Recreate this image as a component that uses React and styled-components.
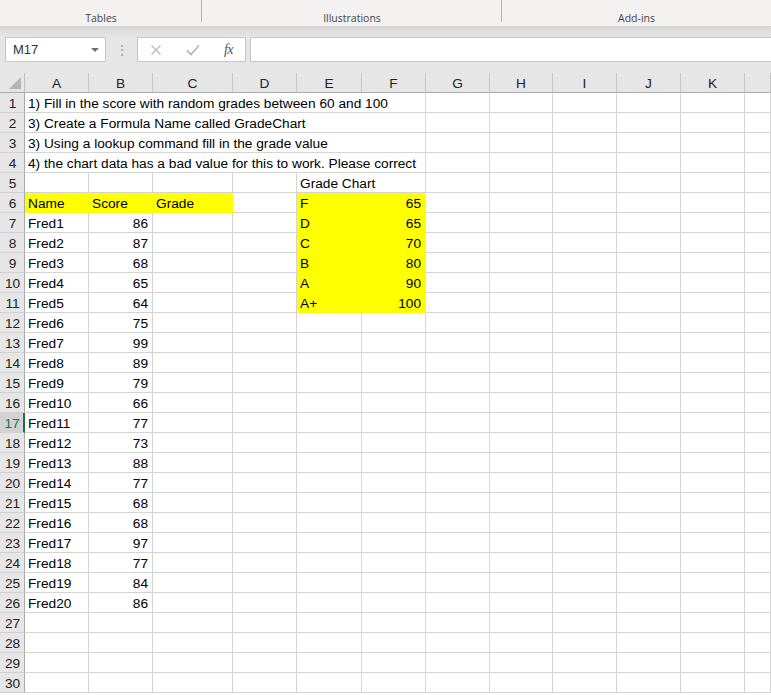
import styled, { createGlobalStyle } from "styled-components";

const COLS = ["A", "B", "C", "D", "E", "F", "G", "H", "I", "J", "K", ""];
const TEMPLATE = "25px 64px 64px 80px 64px 65px 64px 64px 63px 64px 64px 64px 1fr";

const scores = [86, 87, 68, 65, 64, 75, 99, 89, 79, 66, 77, 73, 88, 77, 68, 68, 97, 77, 84, 86];
const chart = [["F", 65], ["D", 65], ["C", 70], ["B", 80], ["A", 90], ["A+", 100]];
const notes = [
  "1) Fill in the score with random grades between 60 and 100",
  "3) Create a Formula Name called GradeChart",
  "3) Using a lookup command fill in the grade value",
  "4) the chart data has a bad value for this to work. Please correct",
];

// build a map of row -> cells keyed by column index
const buildRows = () => {
  const rows = [];
  for (let r = 1; r <= 30; r++) rows.push({ num: r, cells: {} });
  const set = (r, c, cell) => (rows[r - 1].cells[c] = cell);

  notes.forEach((t, i) => set(i + 1, 0, { text: t, span: 6 }));
  set(5, 4, { text: "Grade Chart", span: 2 });
  set(6, 0, { text: "Name", fill: true });
  set(6, 1, { text: "Score", fill: true });
  set(6, 2, { text: "Grade", fill: true });
  scores.forEach((s, i) => {
    set(i + 7, 0, { text: `Fred${i + 1}` });
    set(i + 7, 1, { text: s, right: true });
  });
  chart.forEach(([g, v], i) => {
    set(i + 6, 4, { text: g, fill: true });
    set(i + 6, 5, { text: v, right: true, fill: true });
  });
  return rows;
};

const Cross = () => (
  <svg width="12" height="12" viewBox="0 0 12 12">
    <path d="M1.5 1.5 L10.5 10.5 M10.5 1.5 L1.5 10.5" stroke="#b9b9b9" strokeWidth="1.3" fill="none" />
  </svg>
);

const Check = () => (
  <svg width="14" height="12" viewBox="0 0 14 12">
    <path d="M1 6.5 L5 10.5 L13 1.5" stroke="#b9b9b9" strokeWidth="1.8" fill="none" />
  </svg>
);

const App = () => {
  const rows = buildRows();
  return (
    <>
      <GlobalStyle />
      <Ribbon>
        <RibbonGroup $w="202px">Tables</RibbonGroup>
        <RibbonGroup $w="300px">Illustrations</RibbonGroup>
        <RibbonGroup $last>Add-ins</RibbonGroup>
      </Ribbon>

      <FormulaBar>
        <NameBox>
          M17
          <Caret />
        </NameBox>
        <Grip>⋮</Grip>
        <FxBox>
          <Cross />
          <Check />
          <Fx>fx</Fx>
        </FxBox>
        <FormulaInput />
      </FormulaBar>

      <Sheet>
        <Row>
          <Corner>
            <Triangle />
          </Corner>
          {COLS.map((c, i) => (
            <ColHead key={i}>{c}</ColHead>
          ))}
        </Row>
        {rows.map((row) => {
          const out = [];
          for (let c = 0; c < COLS.length; c++) {
            const cell = row.cells[c];
            if (cell) {
              out.push(
                <Cell key={c} $span={cell.span} $right={cell.right} $fill={cell.fill}>
                  {cell.text}
                </Cell>
              );
              c += (cell.span || 1) - 1;
            } else {
              out.push(<Cell key={c} />);
            }
          }
          return (
            <Row key={row.num}>
              <RowHead $active={row.num === 17}>{row.num}</RowHead>
              {out}
            </Row>
          );
        })}
      </Sheet>
    </>
  );
};

export default App;

const GlobalStyle = createGlobalStyle`
  body {
    margin: 0;
    background: #ffffff;
    overflow: hidden;
  }
`;

const Ribbon = styled.div`
  display: flex;
  height: 26px;
  background: #f3f2f1;
  font-family: "Open Sans", "Noto Sans", sans-serif;
  font-size: 10.5px;
  color: #444444;
`;

const RibbonGroup = styled.div`
  ${({ $w }) => ($w ? `width: ${$w};` : "flex: 1;")}
  box-sizing: border-box;
  display: flex;
  justify-content: center;
  padding-top: 11px;
  position: relative;

  &::after {
    content: "";
    display: ${({ $last }) => ($last ? "none" : "block")};
    position: absolute;
    right: 0;
    top: 0;
    height: 22px;
    width: 1px;
    background: #b3b3b3;
  }
`;

const FormulaBar = styled.div`
  height: 47px;
  box-sizing: border-box;
  background: linear-gradient(#d5d5d5 0px, #e2e2e2 8px, #e6e6e6 11px);
  display: flex;
  align-items: flex-start;
  padding: 11px 0 0 5px;
  font-family: "Liberation Sans", Arial, sans-serif;
`;

const NameBox = styled.div`
  width: 101px;
  height: 25px;
  box-sizing: border-box;
  background: #ffffff;
  border: 1px solid #c6c6c6;
  display: flex;
  align-items: center;
  justify-content: space-between;
  padding: 0 6px 0 7px;
  font-size: 13px;
  color: #333333;
`;

const Caret = styled.span`
  width: 0;
  height: 0;
  border-left: 4px solid transparent;
  border-right: 4px solid transparent;
  border-top: 4px solid #707070;
`;

const Grip = styled.div`
  width: 31px;
  height: 25px;
  display: flex;
  align-items: center;
  justify-content: center;
  color: #a0a0a0;
  font-size: 14px;
`;

const FxBox = styled.div`
  width: 109px;
  height: 25px;
  box-sizing: border-box;
  background: #ffffff;
  border: 1px solid #c6c6c6;
  display: flex;
  align-items: center;
  justify-content: space-between;
  padding: 0 12px 0 12px;
`;

const Fx = styled.span`
  font-family: "Liberation Serif", "Times New Roman", serif;
  font-style: italic;
  font-size: 14px;
  color: #555555;
  letter-spacing: -0.5px;
`;

const FormulaInput = styled.div`
  flex: 1;
  height: 25px;
  margin-left: 4px;
  box-sizing: border-box;
  background: #ffffff;
  border: 1px solid #c6c6c6;
  border-right: none;
`;

const Sheet = styled.div`
  font-family: "Liberation Sans", Arial, sans-serif;
  font-size: 13.7px;
  color: #000000;
`;

const Row = styled.div`
  display: grid;
  grid-template-columns: ${TEMPLATE};
  height: 20px;
`;

const Corner = styled.div`
  background: #e6e6e6;
  border-right: 1px solid #c0c0c0;
  border-bottom: 1px solid #ababab;
  box-sizing: border-box;
  display: flex;
  align-items: flex-end;
  justify-content: flex-end;
  padding: 0 3px 3px 0;
`;

const Triangle = styled.span`
  width: 0;
  height: 0;
  border-left: 12px solid transparent;
  border-bottom: 12px solid #b4b4b4;
`;

const ColHead = styled.div`
  background: #e6e6e6;
  border-right: 1px solid #c6c6c6;
  border-bottom: 1px solid #ababab;
  box-sizing: border-box;
  display: flex;
  align-items: center;
  justify-content: center;
  color: #222222;
  padding-top: 1px;
`;

const RowHead = styled.div`
  background: ${({ $active }) => ($active ? "#d2d2d2" : "#e6e6e6")};
  color: ${({ $active }) => ($active ? "#217346" : "#222222")};
  border-right: ${({ $active }) => ($active ? "2px solid #217346" : "1px solid #ababab")};
  border-bottom: 1px solid #d0d0d0;
  box-sizing: border-box;
  display: flex;
  align-items: center;
  justify-content: center;
  padding: 1px 0 0 1px;
`;

const Cell = styled.div`
  grid-column: span ${({ $span }) => $span || 1};
  background: ${({ $fill }) => ($fill ? "#ffff00" : "transparent")};
  border-right: 1px solid ${({ $fill }) => ($fill ? "#ffff00" : "#d4d4d4")};
  border-bottom: 1px solid ${({ $fill }) => ($fill ? "#ffff00" : "#d4d4d4")};
  box-sizing: border-box;
  padding: 1px 4px 0 3px;
  line-height: 19px;
  white-space: nowrap;
  overflow: hidden;
  text-align: ${({ $right }) => ($right ? "right" : "left")};
`;
